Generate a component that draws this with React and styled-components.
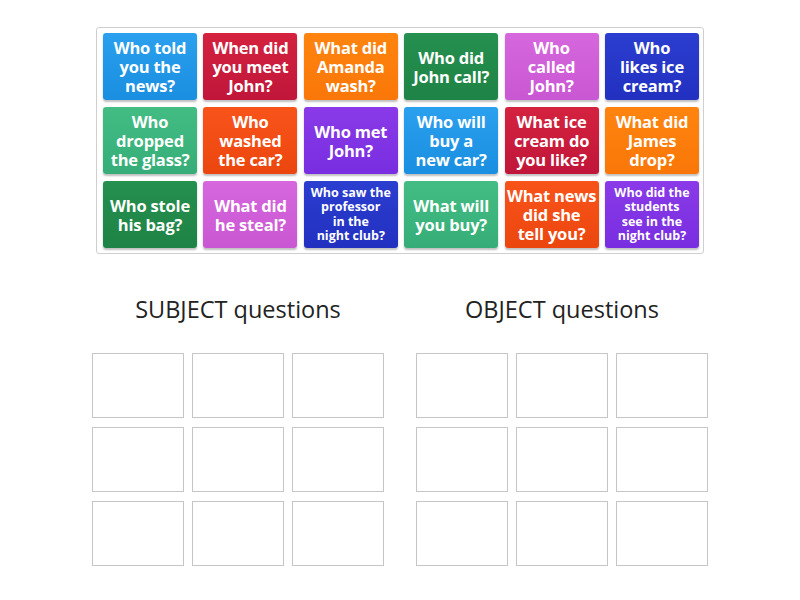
import React from 'react';
import styled, { createGlobalStyle } from 'styled-components';

const GlobalStyle = createGlobalStyle`
  html, body {
    margin: 0;
    padding: 0;
    background: #fff;
  }
  body {
    font-family: "Open Sans", "Noto Sans", sans-serif;
  }
`;

const Page = styled.div`
  width: 800px;
  height: 600px;
  display: flex;
  flex-direction: column;
  align-items: center;
  padding-top: 27px;
  box-sizing: border-box;
`;

const Pool = styled.div`
  width: 608px;
  box-sizing: border-box;
  padding: 5px 6px;
  border: 1px solid #cfcfcf;
  border-radius: 3px;
  display: grid;
  grid-template-columns: repeat(6, 94px);
  grid-auto-rows: 67px;
  column-gap: 6.4px;
  row-gap: 7px;
`;

const Tile = styled.div`
  background: ${(p) => `linear-gradient(to bottom, ${p.$top}, ${p.$bottom})`};
  border-radius: 3px;
  box-shadow: 0 2px 2px rgba(0, 0, 0, 0.25);
  display: flex;
  align-items: center;
  justify-content: center;
  text-align: center;
  color: #fff;
  font-weight: 700;
  white-space: nowrap;
  font-size: ${(p) => (p.$small ? '12.5px' : '16.5px')};
  line-height: ${(p) => (p.$small ? '14.5px' : '19px')};
  letter-spacing: ${(p) => (p.$small ? '0' : '-0.2px')};
  overflow: hidden;
`;

const Groups = styled.div`
  display: flex;
  gap: 32px;
  margin-top: 40px;
`;

const Group = styled.div`
  width: 292px;
  display: flex;
  flex-direction: column;
  align-items: center;
`;

const Heading = styled.div`
  font-size: 23.5px;
  line-height: 30px;
  color: #222;
  margin-bottom: 29px;
`;

const Slots = styled.div`
  display: grid;
  grid-template-columns: repeat(3, 92px);
  grid-auto-rows: 65px;
  column-gap: 8px;
  row-gap: 9px;
`;

const Slot = styled.div`
  border: 1px solid #c6c6c6;
  box-sizing: border-box;
  background: #fff;
`;

const colors = [
  ['#2aa0ee', '#1a8ee0'],
  ['#d4223f', '#c0163a'],
  ['#ff840f', '#f97708'],
  ['#25904f', '#1e8346'],
  ['#d667dd', '#c957d3'],
  ['#2b3ed0', '#2230c0'],
  ['#43bd84', '#36ad78'],
  ['#f8541a', '#ec460f'],
  ['#8a3ae8', '#782ee0'],
];

const cards = [
  { text: ['Who told', 'you the', 'news?'] },
  { text: ['When did', 'you meet', 'John?'] },
  { text: ['What did', 'Amanda', 'wash?'] },
  { text: ['Who did', 'John call?'] },
  { text: ['Who', 'called', 'John?'] },
  { text: ['Who', 'likes ice', 'cream?'] },
  { text: ['Who', 'dropped', 'the glass?'] },
  { text: ['Who', 'washed', 'the car?'] },
  { text: ['Who met', 'John?'] },
  { text: ['Who will', 'buy a', 'new car?'] },
  { text: ['What ice', 'cream do', 'you like?'] },
  { text: ['What did', 'James', 'drop?'] },
  { text: ['Who stole', 'his bag?'] },
  { text: ['What did', 'he steal?'] },
  { text: ['Who saw the', 'professor', 'in the', 'night club?'], small: true },
  { text: ['What will', 'you buy?'] },
  { text: ['What news', 'did she', 'tell you?'] },
  { text: ['Who did the', 'students', 'see in the', 'night club?'], small: true },
];

function SlotGrid() {
  return (
    <Slots>
      {Array.from({ length: 9 }).map((_, i) => (
        <Slot key={i} />
      ))}
    </Slots>
  );
}

export default function App() {
  return (
    <>
      <GlobalStyle />
      <Page>
        <Pool>
          {cards.map((card, i) => {
            const [top, bottom] = colors[i % colors.length];
            return (
              <Tile key={i} $top={top} $bottom={bottom} $small={card.small}>
                <span>
                  {card.text.map((line, j) => (
                    <React.Fragment key={j}>
                      {line}
                      {j < card.text.length - 1 && <br />}
                    </React.Fragment>
                  ))}
                </span>
              </Tile>
            );
          })}
        </Pool>
        <Groups>
          <Group>
            <Heading>SUBJECT questions</Heading>
            <SlotGrid />
          </Group>
          <Group>
            <Heading>OBJECT questions</Heading>
            <SlotGrid />
          </Group>
        </Groups>
      </Page>
    </>
  );
}
